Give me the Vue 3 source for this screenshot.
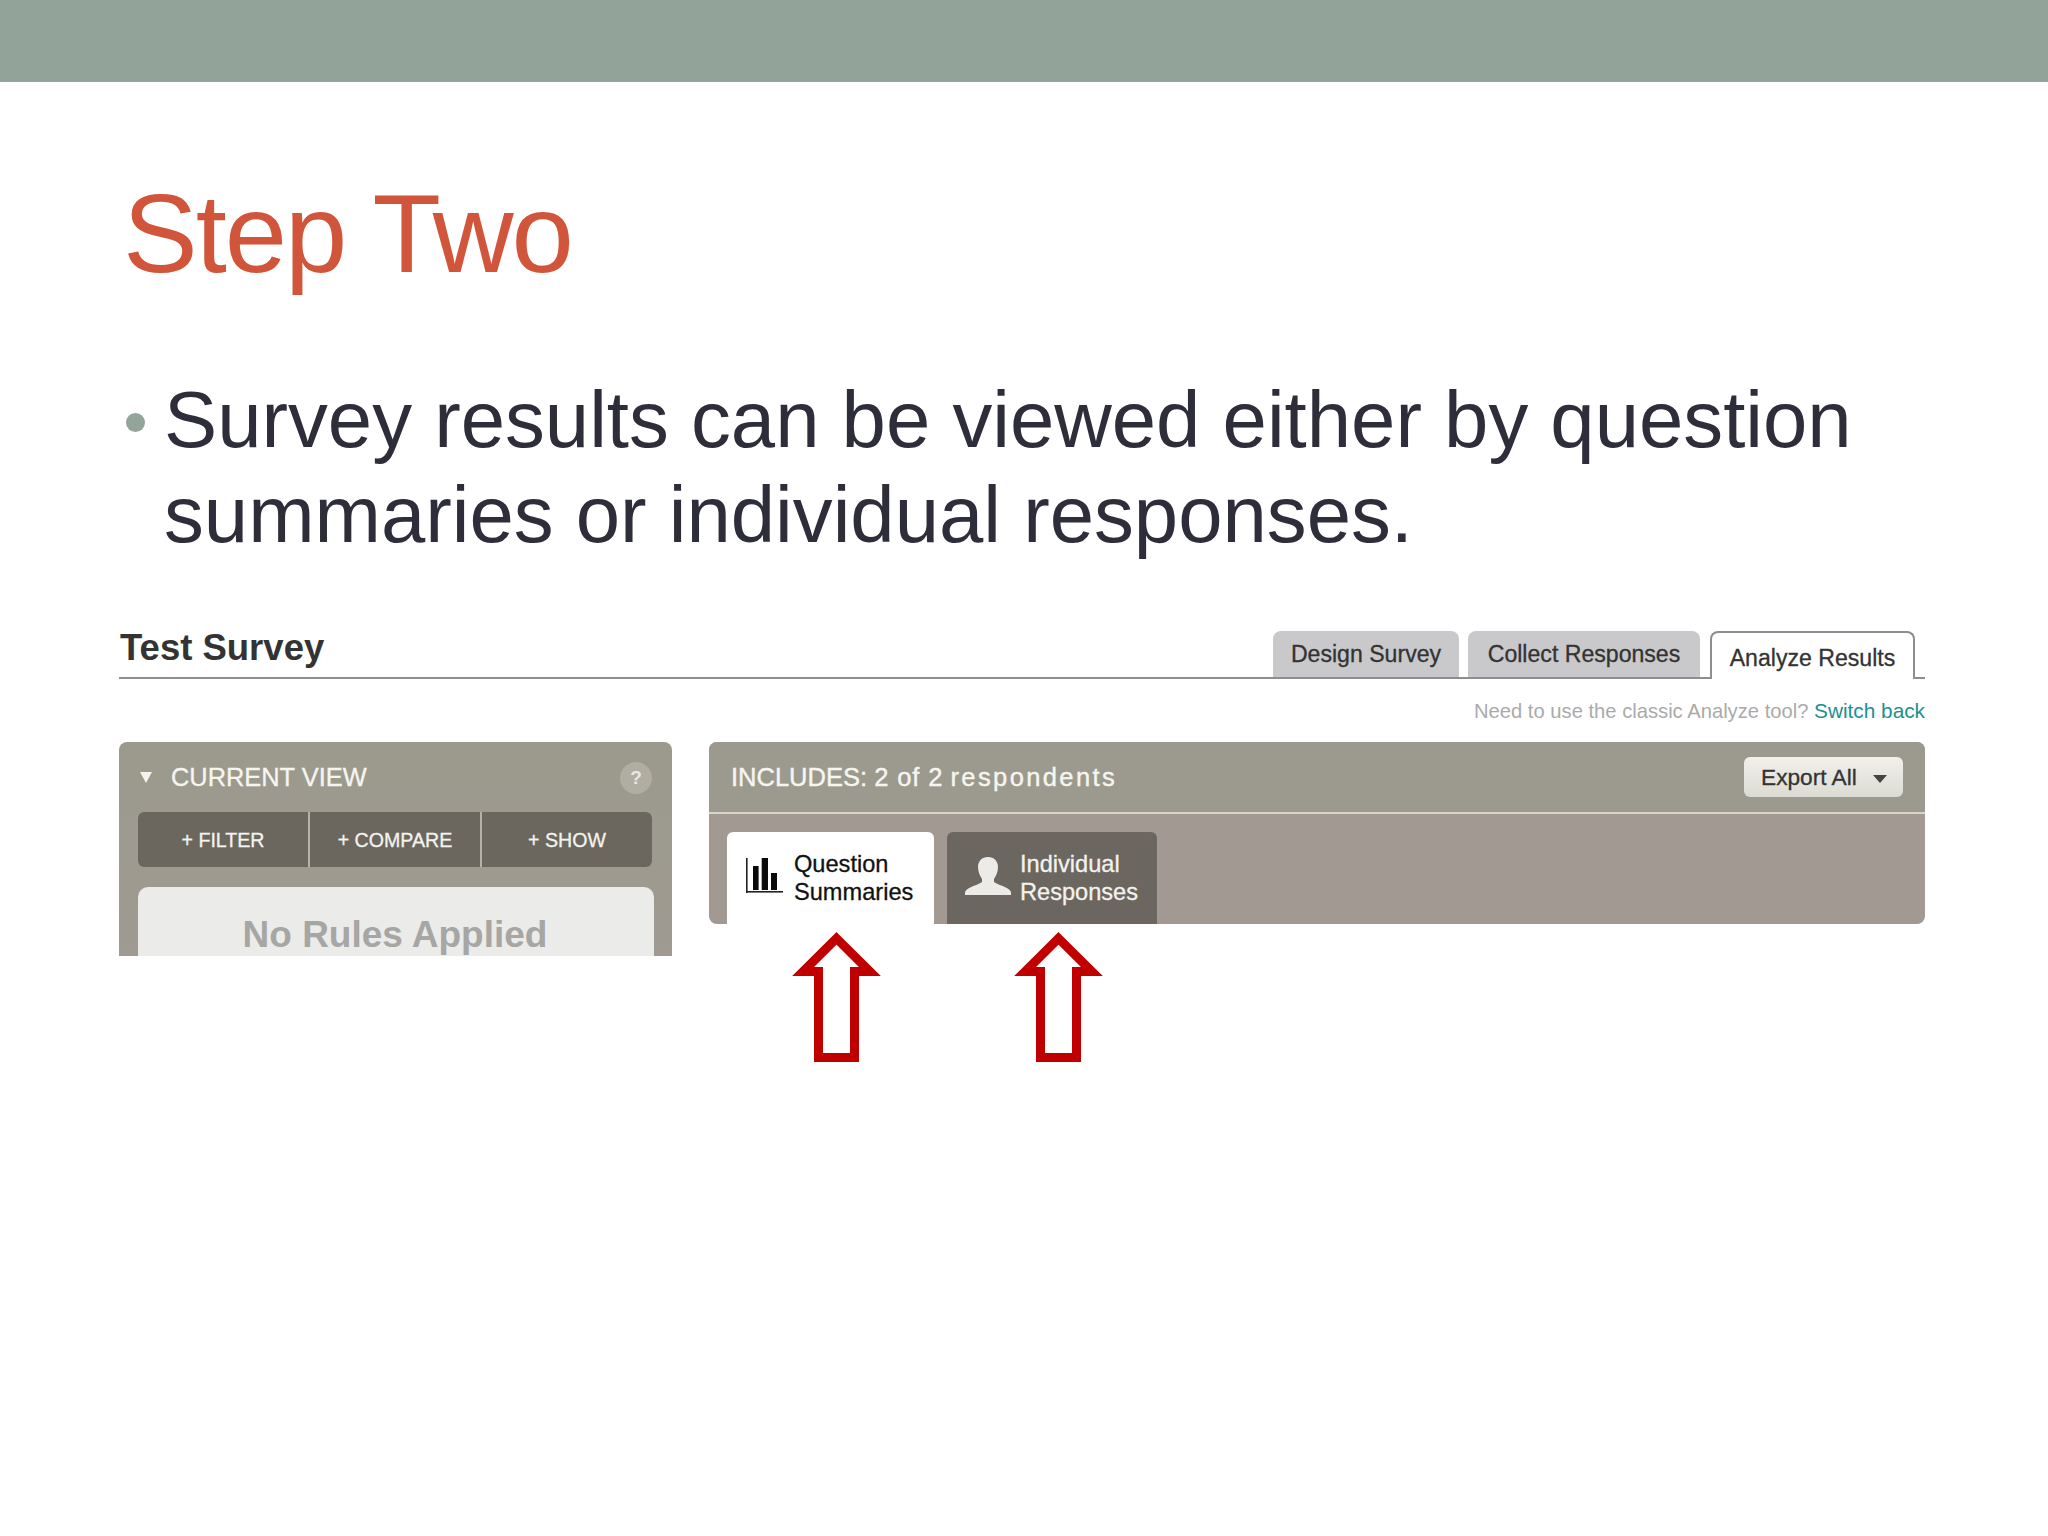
<script setup>
const actions = ['+ FILTER', '+ COMPARE', '+ SHOW']
const topTabs = [
  { label: 'Design Survey', cls: 'design' },
  { label: 'Collect Responses', cls: 'collect' },
  { label: 'Analyze Results', cls: 'analyze' }
]
</script>

<template>
  <div class="slide">
    <div class="bar"></div>
    <h1 class="title">Step Two</h1>
    <div class="bullet-row">
      <span class="dot"></span>
      <p class="bullet-text">Survey results can be viewed either by question summaries or individual responses.</p>
    </div>

    <section class="survey">
      <header class="survey-head">
        <h2 class="survey-name">Test Survey</h2>
        <nav class="top-tabs">
          <a v-for="t in topTabs" :key="t.label" class="top-tab" :class="t.cls">{{ t.label }}</a>
        </nav>
      </header>
      <div class="classic">Need to use the classic Analyze tool? <a class="switch">Switch back</a></div>

      <div class="columns">
        <aside class="view-panel">
          <div class="view-head">
            <span class="tri"></span>
            <span class="view-title">CURRENT VIEW</span>
            <span class="help">?</span>
          </div>
          <div class="actions">
            <div v-for="a in actions" :key="a" class="action">{{ a }}</div>
          </div>
          <div class="rules">No Rules Applied</div>
        </aside>

        <div class="right-col">
          <div class="results">
            <div class="results-head">
              <span class="includes"><span class="inc-a">INCLUDES:</span> <span class="inc-b">2 of 2</span> <span class="inc-c">respondents</span></span>
              <button class="export">Export All<span class="caret"></span></button>
            </div>
            <div class="results-tabs">
              <div class="r-tab active">
                <svg class="chart" width="37" height="35" viewBox="0 0 37 35">
                  <rect x="0" y="0" width="1.6" height="35" fill="#222" />
                  <rect x="0" y="33" width="37" height="1.6" fill="#222" />
                  <rect x="7" y="8" width="5.6" height="24" fill="#0a0a0a" />
                  <rect x="15.7" y="0" width="6.3" height="32" fill="#0a0a0a" />
                  <rect x="25" y="15" width="6" height="17" fill="#0a0a0a" />
                </svg>
                <span class="r-label">Question<br />Summaries</span>
              </div>
              <div class="r-tab inactive">
                <svg class="person" width="46" height="38" viewBox="0 0 46 38">
                  <path fill="#ecebe7" d="M23 0C29 0 33 4 33 10C33 15 31 19 29 22L29 25C33 28 44 30 46 35L46 38L0 38L0 35C2 30 13 28 17 25L17 22C15 19 13 15 13 10C13 4 17 0 23 0Z" />
                </svg>
                <span class="r-label">Individual<br />Responses</span>
              </div>
            </div>
          </div>
          <div class="arrows">
            <svg v-for="n in 2" :key="n" class="arrow" width="87" height="130" viewBox="0 0 87 130">
              <path d="M43.5 6.4L76.9 39.5L61.5 39.5L61.5 125.5L25.5 125.5L25.5 39.5L10.1 39.5Z" fill="#fff" stroke="#c00000" stroke-width="9" stroke-miterlimit="10" />
            </svg>
          </div>
        </div>
      </div>
    </section>
  </div>
</template>

<style scoped>
.slide {
  width: 2048px;
  height: 1536px;
  background: #fff;
  font-family: "Liberation Sans", Arial, sans-serif;
  overflow: hidden;
}
.bar {
  height: 82px;
  background: #92a399;
}
.title {
  margin: 92px 0 0 123px;
  font-size: 112px;
  letter-spacing: -2px;
  line-height: 120px;
  font-weight: 400;
  color: #d1553b;
}
.bullet-row {
  display: flex;
  margin: 78px 0 0 125px;
  width: 1810px;
}
.dot {
  flex: none;
  width: 19px;
  height: 19px;
  margin: 41px 19px 0 1px;
  border-radius: 50%;
  background: #93a49a;
}
.bullet-text {
  margin: 0;
  font-size: 79.7px;
  line-height: 95px;
  color: #2e2d3a;
}
.survey {
  margin: 69px 0 0 119px;
  width: 1806px;
}
.survey-head {
  display: flex;
  justify-content: space-between;
  align-items: flex-end;
  height: 46px;
  border-bottom: 2px solid #8e8e90;
}
.survey-name {
  margin: 0 0 7px 1px;
  font-size: 36.5px;
  line-height: 44px;
  font-weight: 700;
  color: #333;
}
.top-tabs {
  display: flex;
  gap: 9px;
  margin-right: 10px;
  align-self: flex-end;
}
.top-tab {
  box-sizing: border-box;
  height: 46px;
  border-radius: 8px 8px 0 0;
  background: #c9c8ca;
  color: #333;
  font-size: 23.1px;
  line-height: 47px;
  text-align: center;
  -webkit-text-stroke: 0.3px #333;
}
.design { width: 186px; }
.collect { width: 232px; }
.analyze {
  width: 205px;
  height: 48px;
  margin-bottom: -2px;
  margin-left: 1px;
  background: #fff;
  border: 2px solid #8e8e90;
  border-bottom: 0;
  line-height: 50px;
}
.classic {
  margin-top: 20px;
  height: 24px;
  font-size: 20.2px;
  line-height: 24px;
  text-align: right;
  color: #aaa;
}
.switch {
  font-size: 20.8px;
  color: #1d8f90;
}
.columns {
  display: flex;
  gap: 37px;
  margin-top: 19px;
  align-items: flex-start;
}
.view-panel {
  flex: none;
  width: 553px;
  height: 214px;
  overflow: hidden;
  border-radius: 8px 8px 0 0;
  background: linear-gradient(#9b9a8d, #a09a92);
}
.view-head {
  display: flex;
  align-items: center;
  height: 70px;
  padding: 0 20px 0 21px;
}
.tri {
  width: 0;
  height: 0;
  border-left: 6px solid transparent;
  border-right: 6px solid transparent;
  border-top: 11px solid #f4f3ee;
}
.view-title {
  flex: 1;
  margin-left: 19px;
  font-size: 25.4px;
  color: #f6f5f0;
  -webkit-text-stroke: 0.3px #f6f5f0;
}
.help {
  width: 32px;
  height: 32px;
  margin-top: 1px;
  border-radius: 50%;
  background: #b0ada3;
  color: #e8e7e2;
  font-size: 19px;
  font-weight: 700;
  line-height: 32px;
  text-align: center;
}
.actions {
  display: flex;
  height: 55px;
  margin: 0 20px 20px 19px;
  border-radius: 6px;
  overflow: hidden;
  gap: 2px;
  background: #b5b2a9;
}
.action {
  flex: 1;
  background: #6b675f;
  color: #f4f3ee;
  font-size: 19.6px;
  line-height: 56px;
  text-align: center;
  -webkit-text-stroke: 0.3px #f4f3ee;
}
.rules {
  height: 69px;
  margin: 0 18px 0 19px;
  padding: 28px 2px 0 0;
  box-sizing: border-box;
  border-radius: 10px 10px 0 0;
  background: #ebebe9;
  color: #a6a6a4;
  font-size: 37px;
  font-weight: 700;
  line-height: 40px;
  text-align: center;
  white-space: nowrap;
  overflow: hidden;
}
.right-col {
  flex: 1;
  min-width: 0;
}
.results {
  height: 182px;
  border-radius: 8px;
  overflow: hidden;
  background: #a19992;
}
.results-head {
  display: flex;
  align-items: center;
  justify-content: space-between;
  box-sizing: border-box;
  height: 72px;
  padding: 0 22px;
  background: #9c9a8e;
  border-bottom: 2px solid #d8d6cc;
}
.includes {
  font-size: 25.5px;
  color: #f6f5f0;
  -webkit-text-stroke: 0.4px #f6f5f0;
}
.inc-b {
  letter-spacing: 0.9px;
}
.inc-c {
  letter-spacing: 2.4px;
}
.export {
  display: flex;
  align-items: center;
  width: 159px;
  height: 40px;
  padding: 0 0 0 17px;
  border: 0;
  border-radius: 6px;
  background: linear-gradient(#f1f0eb, #dcdbd3);
  color: #333;
  font-family: inherit;
  font-size: 22.7px;
  -webkit-text-stroke: 0.3px #333;
}
.caret {
  margin-left: 16px;
  margin-top: 4px;
  width: 0;
  height: 0;
  border-left: 7px solid transparent;
  border-right: 7px solid transparent;
  border-top: 8px solid #444;
}
.results-tabs {
  display: flex;
  gap: 13px;
  padding: 18px 0 0 18px;
}
.r-tab {
  display: flex;
  align-items: center;
  box-sizing: border-box;
  height: 92px;
  border-radius: 6px 6px 0 0;
}
.active {
  width: 207px;
  padding: 0 0 0 19px;
  background: #fff;
  color: #111;
}
.inactive {
  width: 210px;
  padding: 0 0 0 18px;
  background: #6b665f;
  color: #f3f2ed;
}
.chart {
  flex: none;
  margin: 0 11px 5px 0;
}
.person {
  flex: none;
  margin: 0 9px 4px 0;
}
.r-label {
  font-size: 23.6px;
  line-height: 28px;
  white-space: nowrap;
  -webkit-text-stroke: 0.3px currentColor;
}
.arrows {
  display: flex;
  gap: 135px;
  margin: 8px 0 0 84px;
}
.arrow {
  overflow: visible;
}
</style>
